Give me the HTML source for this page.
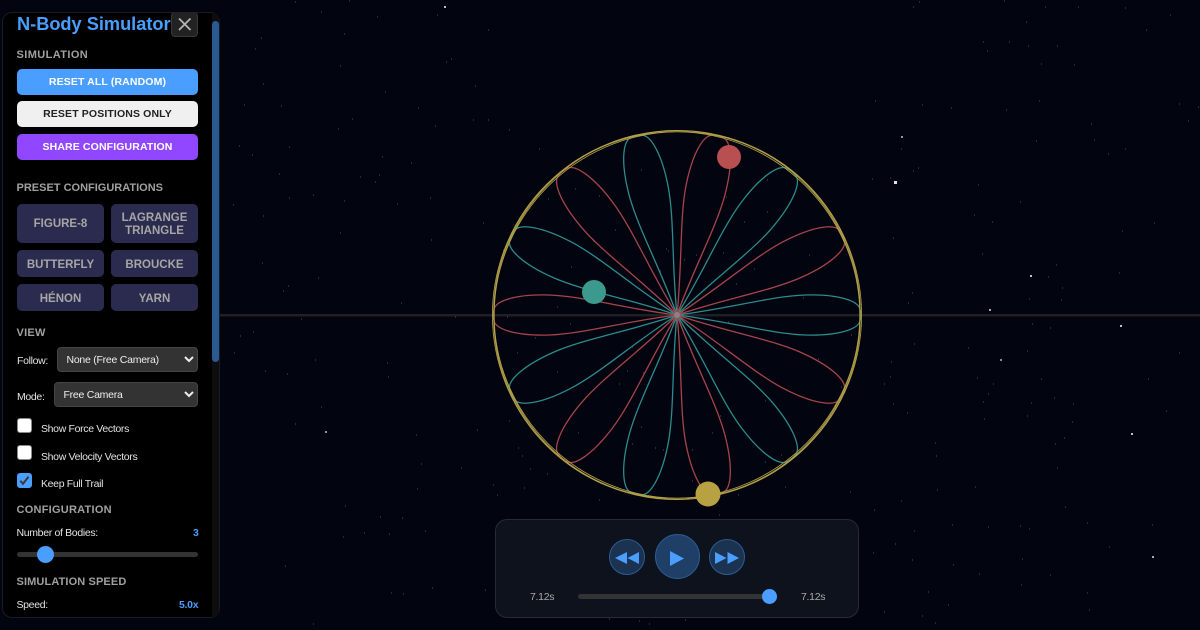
<!DOCTYPE html>
<html lang="en">
<head>
<meta charset="utf-8">
<title>N-Body Simulator</title>
<style>
*{box-sizing:border-box}
html,body{margin:0;padding:0;width:1200px;height:630px;overflow:hidden;background:#02040f;font-family:"Liberation Sans",Arial,sans-serif}
#scene{position:absolute;left:0;top:0}
.panel{position:absolute;left:2px;top:12px;width:218px;height:606px;background:#000;border:1px solid #181c28;border-radius:10px;overflow:hidden}
h1{position:absolute;left:17px;top:11.500px;margin:0;font-size:18.200px;line-height:24px;font-weight:700;color:#4a9eff;white-space:nowrap}
h2{position:absolute;left:16.500px;margin:0;font-size:11px;line-height:14px;font-weight:700;color:#a0a0a0;letter-spacing:.25px;white-space:nowrap}
button{position:absolute;border:0;padding:0;font-family:"Liberation Sans",Arial,sans-serif;font-weight:700;text-align:center}
.act{left:17px;width:181px;height:26px;border-radius:5px;font-size:10.500px;letter-spacing:.13px}
.pre{width:87px;border-radius:5px;background:#2b2b4f;color:#a6a6a6;font-size:11.500px;line-height:13px;padding-top:2px}
.pre.s{padding-top:3px}
.lab{position:absolute;color:#e2e2e2;font-size:10.500px;line-height:14px;white-space:nowrap;letter-spacing:-.33px}
select{position:absolute;height:25px;background:#333;border:1px solid #444;border-radius:4px;color:#eee;font-family:"Liberation Sans",Arial,sans-serif;font-size:10.500px;letter-spacing:-.25px;padding-left:5px}
input[type=checkbox]{position:absolute;left:17px;width:15px;height:15px;margin:0;appearance:none;-webkit-appearance:none;background:#fff;border:1px solid #8a8a8a;border-radius:3px}
input[type=checkbox]:checked{background:#4a9eff;border-color:#4a9eff}
.val{position:absolute;color:#4a9eff;font-size:10.500px;line-height:14px;font-weight:700;letter-spacing:-.3px}
.thumb{position:absolute;border-radius:50%;background:#4a9eff}
.track{position:absolute;background:#333;border-radius:3px}
.sb-track{position:absolute;left:212px;top:13px;width:7px;height:604px;background:#0d0d0d;border-radius:0 9px 9px 0}
.sb-thumb{position:absolute;left:212px;top:21px;width:7px;height:341px;background:#2b5a91;border-radius:4px}
.close{left:171px;top:12px;width:27px;height:25px;background:#222;border:1px solid #383838;border-radius:4px;border-top:0}
.player{position:absolute;left:495px;top:519px;width:364px;height:99px;background:#0e121c;border:1px solid #272b35;border-radius:12px}
.cb{position:absolute;border-radius:50%;background:#1b3350;border:1px solid #2a5c94}
.time{position:absolute;top:591px;font-size:10.500px;line-height:13px;color:#a9a9a9;letter-spacing:-.3px}
</style>
</head>
<body>
<svg id="scene" width="1200" height="630" viewBox="0 0 1200 630">
<rect width="1200" height="630" fill="#02040f"/>
<path fill="none" stroke="#4c505c" stroke-width="1" d="M913 7h1M919 2h1M1004 1h1M1045 7h1M1078 7h1M1125 8h1M1170 15h1M1146 30h1M1026 22h1M983 42h1M1009 42h1M1028 46h1M1057 46h1M987 51h1M1041 64h1M1074 65h1M875 101h1M922 105h1M951 108h1M1006 110h1M1039 101h1M1179 104h1M1198 107h1M1188 121h1M1091 124h1M1094 140h1M1036 141h1M1125 149h1M1108 154h1M901 149h1M918 168h1M913 171h1M890 178h1M872 179h1M978 185h1M1020 202h1M974 215h1M992 222h1M1154 223h1M1122 231h1M893 238h1M982 254h1M1056 265h1M1119 273h1M1048 277h1M1062 288h1M912 293h1M908 303h1M1029 299h1M1061 300h1M1032 324h1M1050 328h1M914 344h1M968 348h1M1027 351h1M1179 353h1M891 362h1M890 377h1M884 384h1M977 378h1M993 384h1M1041 379h1M1148 379h1M988 394h1M1054 398h1M983 402h1M1031 403h1M1073 404h1M893 404h1M907 413h1M1166 411h1M1027 416h1M984 419h1M1072 422h1M1064 438h1M1055 444h1M935 443h1M936 456h1M1057 468h1M975 487h1M937 490h1M901 501h1M874 510h1M1065 507h1M1087 523h1M1152 525h1M952 525h1M988 527h1M1020 526h1M1029 529h1M914 531h1M895 544h1M1109 547h1M873 553h1M912 560h1M1022 559h1M953 565h1M979 574h1M1050 575h1M1021 585h1M928 592h1M1087 593h1M948 605h1M1089 610h1M884 612h1M922 616h1M935 623h1M295 2h1M349 1h1M321 12h1M377 17h1M437 15h1M488 30h1M261 38h1M344 34h1M255 49h1M340 66h1M451 59h1M446 62h1M263 84h1M475 86h1M385 92h1M244 105h1M281 106h1M418 108h1M352 119h1M338 129h1M435 126h1M473 120h1M488 120h1M239 146h1M289 147h1M252 155h1M382 157h1M411 163h1M279 174h1M360 177h1M379 175h1M375 182h1M313 195h1M289 198h1M344 201h1M397 204h1M430 198h1M233 205h1M263 216h1M483 223h1M340 233h1M431 240h1M262 263h1M318 278h1M288 286h1M283 291h1M401 303h1M301 319h1M455 317h1M253 332h1M240 336h1M234 353h1M315 360h1M387 363h1M265 371h1M287 374h1M388 377h1M321 407h1M295 424h1M416 435h1M477 430h1M421 464h1M461 468h1M417 489h1M493 485h1M497 495h1M345 506h1M380 517h1M402 518h1M425 531h1M364 533h1M389 534h1M343 537h1M285 566h1M432 588h1M485 590h1M391 593h1M403 594h1M313 624h1M509 130h1M539 149h1M641 170h1M575 189h1M548 199h1M599 196h1M483 223h1M615 230h1M593 241h1M666 249h1M668 251h1M503 250h1M571 267h1M660 271h1M557 307h1M507 317h1M767 180h1M726 197h1M767 212h1M744 222h1M809 255h1M696 255h1M723 253h1M684 260h1M754 269h1M736 284h1M803 298h1M570 324h1M535 338h1M517 353h1M632 347h1M557 372h1M627 371h1M643 373h1M619 384h1M509 421h1M578 433h1M641 427h1M632 444h1M655 448h1M663 450h1M518 448h1M522 456h1M530 469h1M547 474h1M524 488h1M599 500h1M728 322h1M851 335h1M818 359h1M841 387h1M765 401h1M720 416h1M712 433h1M692 450h1M781 455h1M765 462h1M692 481h1M785 487h1M738 495h1M850 492h1M719 515h1M609 619h1M639 621h1M649 624h1M685 620h1"/>
<g fill="#bfc0c4">
<rect x="894" y="181" width="3" height="3" fill="#e4e4e4"/><rect x="901" y="136" width="2" height="2" fill="#999"/><rect x="1030" y="275" width="2" height="2"/><rect x="989" y="309" width="2" height="2" fill="#aaa"/><rect x="1120" y="325" width="2" height="2"/><rect x="1000" y="359" width="2" height="2" fill="#888"/><rect x="1131" y="433" width="2" height="2"/><rect x="1152" y="556" width="2" height="2" fill="#aaa"/><rect x="444" y="6" width="2" height="2"/><rect x="325" y="431" width="2" height="2" fill="#999"/>
</g>
<rect x="220" y="314" width="980" height="2.500" fill="#1f2023"/>
<defs><path id="pt" d="M0 0C50 6 95 19 128 20C162 21 181 14 183 6Q184.500 0 183-6C181-14 162-21 128-20C95-19 50-6 0 0Z" fill="none" stroke-width="1.300"/></defs>
<g transform="translate(677 315)">
<g stroke="#2b8b8d">
<use href="#pt" transform="rotate(0)"/><use href="#pt" transform="rotate(-51.430)"/><use href="#pt" transform="rotate(-102.860)"/><use href="#pt" transform="rotate(-154.290)"/><use href="#pt" transform="rotate(-205.710)"/><use href="#pt" transform="rotate(-257.140)"/><use href="#pt" transform="rotate(-308.570)"/>
</g>
<g stroke="#a6444a">
<use href="#pt" transform="rotate(-25.710)"/><use href="#pt" transform="rotate(-77.140)"/><use href="#pt" transform="rotate(-128.570)"/><use href="#pt" transform="rotate(-180)"/><use href="#pt" transform="rotate(-231.430)"/><use href="#pt" transform="rotate(-282.860)"/><use href="#pt" transform="rotate(-334.290)"/>
</g>
<circle r="3" fill="#8f9292" opacity=".75"/>
<g fill="none" stroke="#b3a148" stroke-width=".85">
<circle r="184.600"/>
<ellipse rx="184.300" ry="182.200" transform="rotate(45)"/>
<ellipse rx="184.300" ry="182.200" transform="rotate(-45)"/>
<ellipse rx="182.800" ry="184.300"/>
</g>
</g>
<circle cx="729" cy="157" r="12" fill="#b84f50"/>
<circle cx="594" cy="292" r="12" fill="#3b9a8d"/>
<circle cx="708" cy="494" r="12.500" fill="#b7a143"/>
</svg>

<div class="panel"></div>
<div class="sb-track"></div>
<div class="sb-thumb"></div>

<div style="position:absolute;left:0;top:0">
<h1>N-Body Simulator</h1>
<button class="close" aria-label="Close"><svg width="25" height="24" viewBox="0 0 25 24" style="display:block"><path d="M7 6.500L18.500 18M18.500 6.500L7 18" stroke="#b5b5b5" stroke-width="1.800" fill="none"/></svg></button>

<h2 style="top:48px;letter-spacing:.4px">SIMULATION</h2>
<button class="act" style="top:69px;background:#4a9eff;color:#fff">RESET ALL (RANDOM)</button>
<button class="act" style="top:101px;background:#f0f0f0;color:#222">RESET POSITIONS ONLY</button>
<button class="act" style="top:134px;background:#9147ff;color:#fff">SHARE CONFIGURATION</button>

<h2 style="top:180.500px;letter-spacing:0">PRESET CONFIGURATIONS</h2>
<button class="pre" style="left:17px;top:204px;height:39px">FIGURE-8</button>
<button class="pre" style="left:111px;top:204px;height:39px">LAGRANGE<br>TRIANGLE</button>
<button class="pre s" style="left:17px;top:250px;height:27px">BUTTERFLY</button>
<button class="pre s" style="left:111px;top:250px;height:27px">BROUCKE</button>
<button class="pre s" style="left:17px;top:284px;height:27px">HÉNON</button>
<button class="pre s" style="left:111px;top:284px;height:27px">YARN</button>

<h2 style="top:326px">VIEW</h2>
<span class="lab" style="left:17px;top:354px">Follow:</span>
<select style="left:56.500px;top:347px;width:141.500px"><option>None (Free Camera)</option></select>
<span class="lab" style="left:17px;top:389.500px">Mode:</span>
<select style="left:53.500px;top:382px;width:144.500px"><option>Free Camera</option></select>

<input type="checkbox" style="top:418px">
<span class="lab" style="left:41px;top:422px">Show Force Vectors</span>
<input type="checkbox" style="top:445px">
<span class="lab" style="left:41px;top:450px">Show Velocity Vectors</span>
<input type="checkbox" checked style="top:473px">
<svg style="position:absolute;left:17px;top:473px" width="15" height="15" viewBox="0 0 15 15"><path d="M3.300 7.800L6 10.800L11.500 3.800" fill="none" stroke="#3a3a3a" stroke-width="2"/></svg>
<span class="lab" style="left:41px;top:477px">Keep Full Trail</span>

<h2 style="top:503px">CONFIGURATION</h2>
<span class="lab" style="left:16.500px;top:526px">Number of Bodies:</span>
<span class="val" style="left:193px;top:525.500px">3</span>
<div class="track" style="left:17px;top:552px;width:181px;height:5px"></div>
<div class="thumb" style="left:37px;top:546px;width:17px;height:17px"></div>

<h2 style="top:575px;letter-spacing:.12px">SIMULATION SPEED</h2>
<span class="lab" style="left:16.500px;top:598px">Speed:</span>
<span class="val" style="left:179px;top:597.500px">5.0x</span>
</div>

<div class="player"></div>
<div class="cb" style="left:608.500px;top:538.500px;width:36px;height:36px"></div>
<div class="cb" style="left:654.500px;top:534px;width:45px;height:45px;background:#1f3f66"></div>
<div class="cb" style="left:708.500px;top:538.500px;width:36px;height:36px"></div>
<svg style="position:absolute;left:600px;top:530px" width="160" height="56" viewBox="600 530 160 56">
<path fill="#4a9eff" d="M615 558L627 552V564ZM627.500 558L639 552V564ZM670 551L684 558.500L670 566ZM715 552L726.500 558L715 564ZM727.500 552L739 558L727.500 564Z"/>
</svg>
<span class="time" style="left:530px">7.12s</span>
<div class="track" style="left:578px;top:594px;width:191px;height:5px"></div>
<div class="thumb" style="left:761.500px;top:589px;width:15px;height:15px"></div>
<span class="time" style="left:801px">7.12s</span>
</body>
</html>
